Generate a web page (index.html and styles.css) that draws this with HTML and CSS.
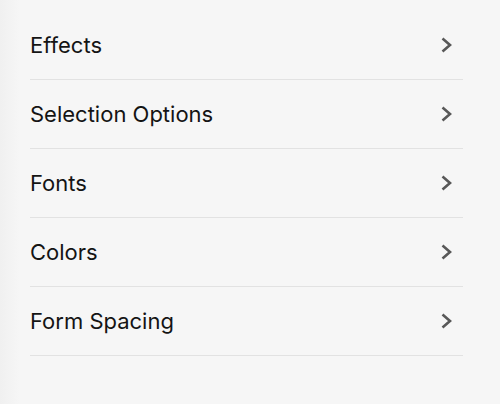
FILE: index.html
```html
<!DOCTYPE html>
<html lang="en">
<head>
<meta charset="utf-8">
<title>Settings</title>
<link rel="stylesheet" href="styles.css">
</head>
<body>
<main class="page">
  <ul class="menu">
    <li class="menu-item"><span class="label">Effects</span><svg class="chev" viewBox="0 0 16 18" width="16" height="18"><path d="M3.5 2.5 L11 9 L3.5 15.5" /></svg></li>
    <li class="menu-item"><span class="label">Selection Options</span><svg class="chev" viewBox="0 0 16 18" width="16" height="18"><path d="M3.5 2.5 L11 9 L3.5 15.5" /></svg></li>
    <li class="menu-item"><span class="label">Fonts</span><svg class="chev" viewBox="0 0 16 18" width="16" height="18"><path d="M3.5 2.5 L11 9 L3.5 15.5" /></svg></li>
    <li class="menu-item"><span class="label">Colors</span><svg class="chev" viewBox="0 0 16 18" width="16" height="18"><path d="M3.5 2.5 L11 9 L3.5 15.5" /></svg></li>
    <li class="menu-item"><span class="label">Form Spacing</span><svg class="chev" viewBox="0 0 16 18" width="16" height="18"><path d="M3.5 2.5 L11 9 L3.5 15.5" /></svg></li>
  </ul>
</main>
</body>
</html>
```
FILE: styles.css
```css
html, body {
  margin: 0;
  padding: 0;
  height: 100%;
}
body {
  background: linear-gradient(to right, #f0f0f0 0, #f6f6f6 20px);
  font-family: Inter, "Noto Sans", sans-serif;
  color: #141414;
}
.page {
  padding: 11px 37px 0 30px;
}
.menu {
  list-style: none;
  margin: 0;
  padding: 0;
}
.menu-item {
  display: flex;
  align-items: center;
  justify-content: space-between;
  height: 68px;
  border-bottom: 1px solid #e2e2e2;
  padding-right: 8px;
}
.label {
  font-size: 22px;
  letter-spacing: 0;
}
.chev {
  display: block;
  fill: none;
  stroke: #585858;
  stroke-width: 2.6;
  stroke-linecap: butt;
  stroke-linejoin: miter;
}
```
